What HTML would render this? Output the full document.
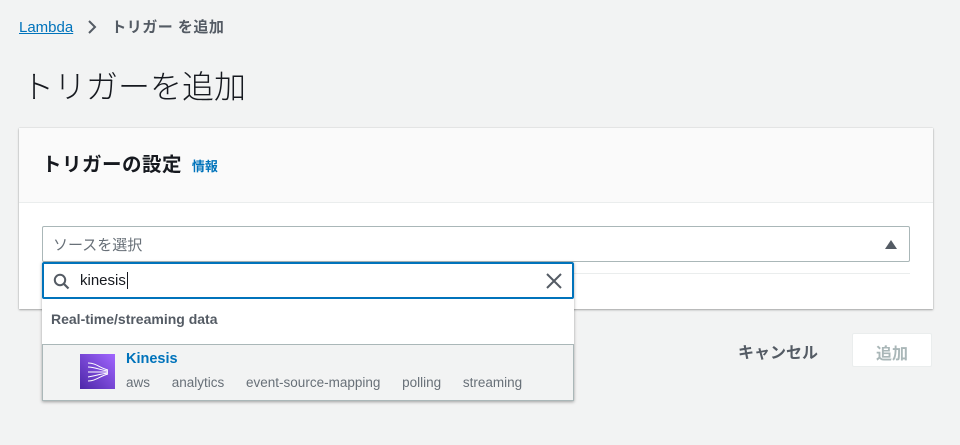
<!DOCTYPE html>
<html><head><meta charset="utf-8"><style>
*{box-sizing:border-box;margin:0;padding:0}
body{width:960px;height:445px;background:#f2f3f3;font-family:"Liberation Sans","Noto Sans CJK JP",sans-serif;position:relative;overflow:hidden;color:#16191f}
.abs{position:absolute}
</style></head><body>
<div class="abs" style="left:19px;top:16px;font-size:15px;color:#545b64;white-space:nowrap"><span style="color:#0073bb;text-decoration:underline">Lambda</span><svg style="margin:0 14px 0 14px;vertical-align:-3px" width="10" height="16"><path d="M2 2L8 8L2 14" fill="none" stroke="#545b64" stroke-width="2"/></svg><span style="font-weight:bold;letter-spacing:0.5px">トリガー を追加</span></div>
<div class="abs" style="left:22px;top:62px;font-size:32px;color:#16191f;font-weight:300">トリガーを追加</div>
<div class="abs" style="left:19px;top:128px;width:914px;height:181px;background:#fff;box-shadow:0 1px 2px rgba(0,0,0,.3),0 0 1px rgba(0,0,0,.2)">
 <div style="height:75px;background:#fafafa;border-bottom:1px solid #eaeded;padding:20px 0 0 23px;font-size:19.5px;font-weight:bold;letter-spacing:0.5px">トリガーの設定 <span style="font-size:13px;color:#0073bb;margin-left:4px;letter-spacing:0">情報</span></div>
 <div class="abs" style="left:23px;top:98px;width:868px;height:36px;border:1px solid #aab7b8;border-radius:2px;padding:7px 10px;font-size:15px;color:#687078">ソースを選択
  <svg class="abs" style="right:12px;top:13px" width="12" height="9"><path d="M0 9L6 0L12 9Z" fill="#545b64"/></svg></div>
 <div class="abs" style="left:23px;top:145px;width:868px;height:1px;background:#eaeded"></div>
</div>
<div class="abs" style="left:42px;top:262px;width:532px;height:139px;background:#fff;box-shadow:0 1px 3px rgba(0,0,0,.35)">
 <div style="height:37px;border:2px solid #0073bb;border-radius:2px;position:relative">
  <svg class="abs" style="left:9px;top:9px" width="17" height="17"><circle cx="7" cy="7" r="5.2" fill="none" stroke="#545b64" stroke-width="2"/><path d="M11 11L15.5 15.5" stroke="#545b64" stroke-width="2.2"/></svg>
  <span class="abs" style="left:36px;top:8px;font-size:15px">kinesis<span style="border-left:1px solid #16191f;margin-left:1px"></span></span>
  <svg class="abs" style="right:10px;top:9px" width="16" height="16"><path d="M1 1L15 15M15 1L1 15" stroke="#545b64" stroke-width="2"/></svg>
 </div>
 <div style="height:45px;padding:12px 0 0 9px;font-size:14px;font-weight:bold;color:#545b64">Real-time/streaming data</div>
 <div style="height:57px;background:#f2f3f3;border:1px solid #aab7b8;position:relative">
  <div class="abs" style="left:37px;top:9px;width:35px;height:35px;background:linear-gradient(45deg,#4d27a8,#a166ff)"><svg width="35" height="35"><g fill="none" stroke="#fff" stroke-width="1"><path d="M8 9C16 9 20 14 28 16"/><path d="M8 13C15 13 20 16 28 17"/><path d="M8 18H28"/><path d="M8 23C15 22 20 20 28 19"/><path d="M8 27C16 27 20 22 28 20"/></g></svg></div>
  <div class="abs" style="left:83px;top:6px;font-size:14.5px;font-weight:bold;color:#0073bb">Kinesis</div>
  <div class="abs" style="left:83px;top:30px;font-size:13.5px;color:#687078;word-spacing:18px;white-space:nowrap">aws analytics event-source-mapping polling streaming</div>
 </div>
</div>
<div class="abs" style="left:738px;top:339px;font-size:16px;font-weight:bold;color:#545b64">キャンセル</div>
<div class="abs" style="left:852px;top:333px;width:80px;height:34px;background:#fff;border:1px solid #eaeded;border-radius:2px;text-align:center;padding-top:6px;font-size:16px;font-weight:bold;color:#aab7b8">追加</div>
</body></html>
